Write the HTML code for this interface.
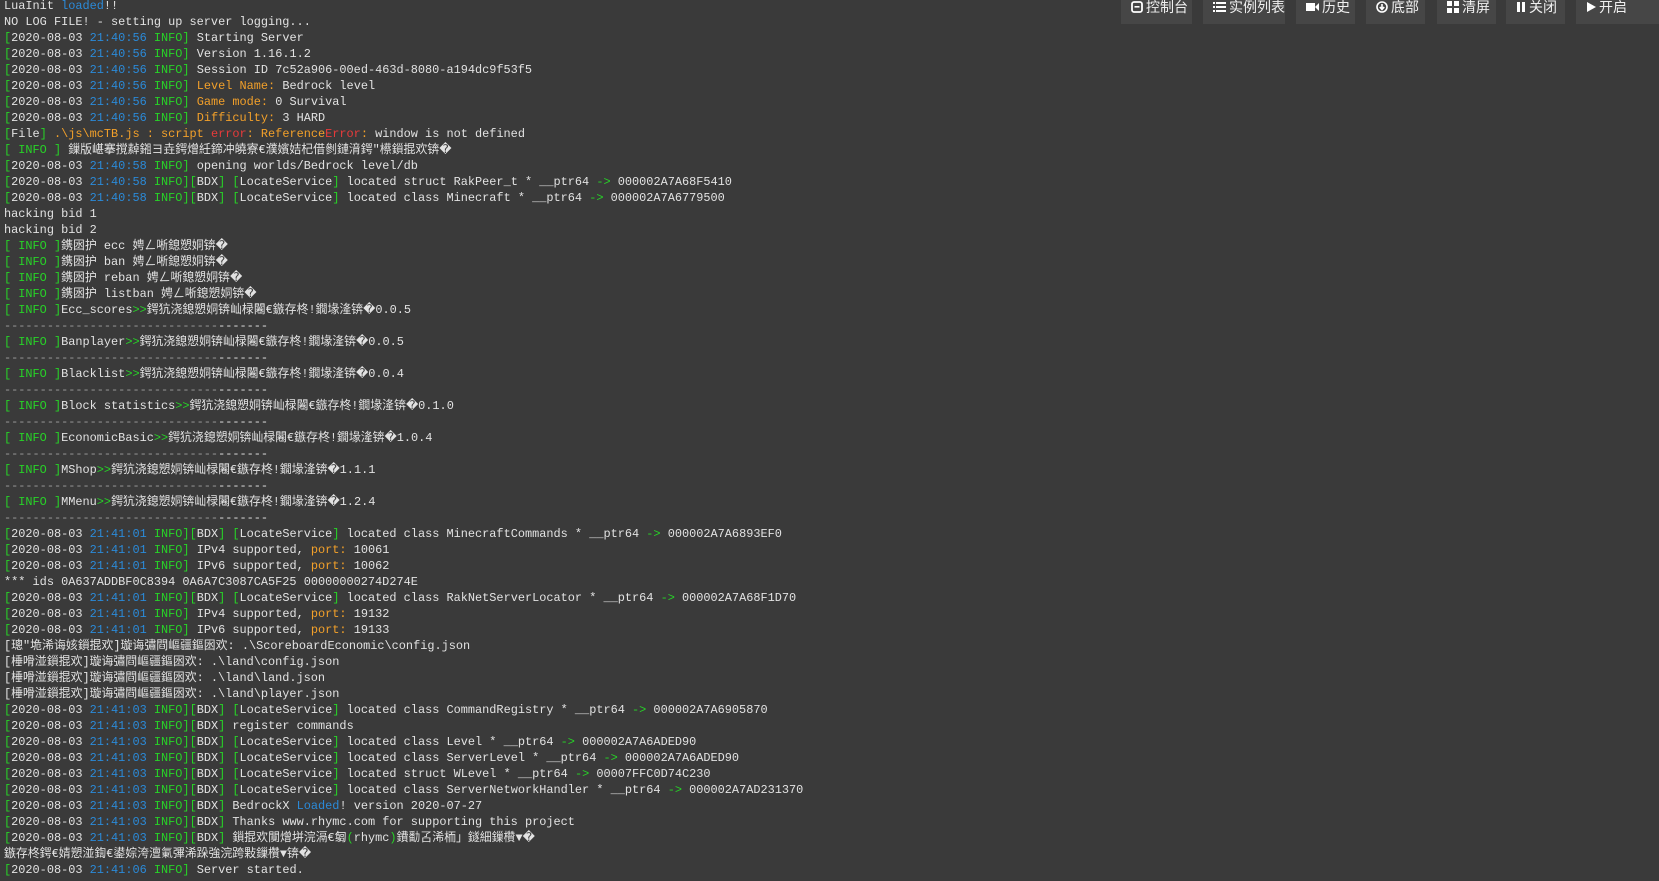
<!DOCTYPE html>
<html><head><meta charset="utf-8"><style>
html,body{margin:0;padding:0;background:#3a3a3a;width:1659px;height:881px;overflow:hidden}
pre{margin:-2px 0 0 4px;font-family:"Liberation Mono","Noto Sans CJK SC",monospace;font-size:11.9px;line-height:16px;color:#e2e2e2;white-space:pre}
.g{color:#27d327}.b{color:#2b8ad8}.o{color:#f2a02a}.r{color:#e83a3a}.d{color:#9a9a9a}
.btn{position:absolute;top:0;height:24px;background:#464646;color:#f0f0f0;font-family:"Liberation Sans","Noto Sans CJK SC",sans-serif;font-size:14px;line-height:15px;display:flex;align-items:flex-start;padding-left:10px;box-sizing:border-box}
.btn span{margin-left:3px}
.ic{display:inline-block;margin-top:1px}
</style></head><body>
<pre>LuaInit <span class="b">loaded</span>!!
NO LOG FILE! - setting up server logging...
<span class="g">[</span>2020-08-03 <span class="b">21:40:56</span> <span class="g">INFO]</span> Starting Server
<span class="g">[</span>2020-08-03 <span class="b">21:40:56</span> <span class="g">INFO]</span> Version 1.16.1.2
<span class="g">[</span>2020-08-03 <span class="b">21:40:56</span> <span class="g">INFO]</span> Session ID 7c52a906-00ed-463d-8080-a194dc9f53f5
<span class="g">[</span>2020-08-03 <span class="b">21:40:56</span> <span class="g">INFO]</span> <span class="o">Level Name:</span> Bedrock level
<span class="g">[</span>2020-08-03 <span class="b">21:40:56</span> <span class="g">INFO]</span> <span class="o">Game mode:</span> 0 Survival
<span class="g">[</span>2020-08-03 <span class="b">21:40:56</span> <span class="g">INFO]</span> <span class="o">Difficulty:</span> 3 HARD
<span class="g">[</span>File<span class="g">]</span> <span class="o">.\js\mcTB.js : script </span><span class="r">error</span><span class="o">: Reference</span><span class="r">Error</span><span class="o">:</span> window is not defined
<span class="g">[ INFO ]</span> 鏁版嵁搴撹繛鎺ヨ垚鍔熷紝鍗冲皢寮€濮嬪姞杞借剼鏈湇鍔″櫒鎻掍欢锛�
<span class="g">[</span>2020-08-03 <span class="b">21:40:58</span> <span class="g">INFO]</span> opening worlds/Bedrock level/db
<span class="g">[</span>2020-08-03 <span class="b">21:40:58</span> <span class="g">INFO]</span><span class="g">[</span>BDX<span class="g">]</span> <span class="g">[</span>LocateService<span class="g">]</span> located struct RakPeer_t * __ptr64 <span class="g">-&gt;</span> 000002A7A68F5410
<span class="g">[</span>2020-08-03 <span class="b">21:40:58</span> <span class="g">INFO]</span><span class="g">[</span>BDX<span class="g">]</span> <span class="g">[</span>LocateService<span class="g">]</span> located class Minecraft * __ptr64 <span class="g">-&gt;</span> 000002A7A6779500
hacking bid 1
hacking bid 2
<span class="g">[ INFO ]</span>鎸囦护 ecc 娉ㄥ唽鎴愬姛锛�
<span class="g">[ INFO ]</span>鎸囦护 ban 娉ㄥ唽鎴愬姛锛�
<span class="g">[ INFO ]</span>鎸囦护 reban 娉ㄥ唽鎴愬姛锛�
<span class="g">[ INFO ]</span>鎸囦护 listban 娉ㄥ唽鎴愬姛锛�
<span class="g">[ INFO ]</span>Ecc_scores<span class="g">&gt;&gt;</span>鍔犺浇鎴愬姛锛屾椂闂€鏃存柊!鐗堟湰锛�0.0.5
<span class="d">------------------------------</span>-------
<span class="g">[ INFO ]</span>Banplayer<span class="g">&gt;&gt;</span>鍔犺浇鎴愬姛锛屾椂闂€鏃存柊!鐗堟湰锛�0.0.5
<span class="d">------------------------------</span>-------
<span class="g">[ INFO ]</span>Blacklist<span class="g">&gt;&gt;</span>鍔犺浇鎴愬姛锛屾椂闂€鏃存柊!鐗堟湰锛�0.0.4
<span class="d">------------------------------</span>-------
<span class="g">[ INFO ]</span>Block statistics<span class="g">&gt;&gt;</span>鍔犺浇鎴愬姛锛屾椂闂€鏃存柊!鐗堟湰锛�0.1.0
<span class="d">------------------------------</span>-------
<span class="g">[ INFO ]</span>EconomicBasic<span class="g">&gt;&gt;</span>鍔犺浇鎴愬姛锛屾椂闂€鏃存柊!鐗堟湰锛�1.0.4
<span class="d">------------------------------</span>-------
<span class="g">[ INFO ]</span>MShop<span class="g">&gt;&gt;</span>鍔犺浇鎴愬姛锛屾椂闂€鏃存柊!鐗堟湰锛�1.1.1
<span class="d">------------------------------</span>-------
<span class="g">[ INFO ]</span>MMenu<span class="g">&gt;&gt;</span>鍔犺浇鎴愬姛锛屾椂闂€鏃存柊!鐗堟湰锛�1.2.4
<span class="d">------------------------------</span>-------
<span class="g">[</span>2020-08-03 <span class="b">21:41:01</span> <span class="g">INFO]</span><span class="g">[</span>BDX<span class="g">]</span> <span class="g">[</span>LocateService<span class="g">]</span> located class MinecraftCommands * __ptr64 <span class="g">-&gt;</span> 000002A7A6893EF0
<span class="g">[</span>2020-08-03 <span class="b">21:41:01</span> <span class="g">INFO]</span> IPv4 supported, <span class="o">port:</span> 10061
<span class="g">[</span>2020-08-03 <span class="b">21:41:01</span> <span class="g">INFO]</span> IPv6 supported, <span class="o">port:</span> 10062
*** ids 0A637ADDBF0C8394 0A6A7C3087CA5F25 00000000274D274E
<span class="g">[</span>2020-08-03 <span class="b">21:41:01</span> <span class="g">INFO]</span><span class="g">[</span>BDX<span class="g">]</span> <span class="g">[</span>LocateService<span class="g">]</span> located class RakNetServerLocator * __ptr64 <span class="g">-&gt;</span> 000002A7A68F1D70
<span class="g">[</span>2020-08-03 <span class="b">21:41:01</span> <span class="g">INFO]</span> IPv4 supported, <span class="o">port:</span> 19132
<span class="g">[</span>2020-08-03 <span class="b">21:41:01</span> <span class="g">INFO]</span> IPv6 supported, <span class="o">port:</span> 19133
[璁″垝浠诲姟鎻掍欢]璇诲彇閰嶇疆鏂囦欢: .\ScoreboardEconomic\config.json
[棰嗗湴鎻掍欢]璇诲彇閰嶇疆鏂囦欢: .\land\config.json
[棰嗗湴鎻掍欢]璇诲彇閰嶇疆鏂囦欢: .\land\land.json
[棰嗗湴鎻掍欢]璇诲彇閰嶇疆鏂囦欢: .\land\player.json
<span class="g">[</span>2020-08-03 <span class="b">21:41:03</span> <span class="g">INFO]</span><span class="g">[</span>BDX<span class="g">]</span> <span class="g">[</span>LocateService<span class="g">]</span> located class CommandRegistry * __ptr64 <span class="g">-&gt;</span> 000002A7A6905870
<span class="g">[</span>2020-08-03 <span class="b">21:41:03</span> <span class="g">INFO]</span><span class="g">[</span>BDX<span class="g">]</span> register commands
<span class="g">[</span>2020-08-03 <span class="b">21:41:03</span> <span class="g">INFO]</span><span class="g">[</span>BDX<span class="g">]</span> <span class="g">[</span>LocateService<span class="g">]</span> located class Level * __ptr64 <span class="g">-&gt;</span> 000002A7A6ADED90
<span class="g">[</span>2020-08-03 <span class="b">21:41:03</span> <span class="g">INFO]</span><span class="g">[</span>BDX<span class="g">]</span> <span class="g">[</span>LocateService<span class="g">]</span> located class ServerLevel * __ptr64 <span class="g">-&gt;</span> 000002A7A6ADED90
<span class="g">[</span>2020-08-03 <span class="b">21:41:03</span> <span class="g">INFO]</span><span class="g">[</span>BDX<span class="g">]</span> <span class="g">[</span>LocateService<span class="g">]</span> located struct WLevel * __ptr64 <span class="g">-&gt;</span> 00007FFC0D74C230
<span class="g">[</span>2020-08-03 <span class="b">21:41:03</span> <span class="g">INFO]</span><span class="g">[</span>BDX<span class="g">]</span> <span class="g">[</span>LocateService<span class="g">]</span> located class ServerNetworkHandler * __ptr64 <span class="g">-&gt;</span> 000002A7AD231370
<span class="g">[</span>2020-08-03 <span class="b">21:41:03</span> <span class="g">INFO]</span><span class="g">[</span>BDX<span class="g">]</span> BedrockX <span class="b">Loaded</span>! version 2020-07-27
<span class="g">[</span>2020-08-03 <span class="b">21:41:03</span> <span class="g">INFO]</span><span class="g">[</span>BDX<span class="g">]</span> Thanks www.rhymc.com for supporting this project
<span class="g">[</span>2020-08-03 <span class="b">21:41:03</span> <span class="g">INFO]</span><span class="g">[</span>BDX<span class="g">]</span> 鎻掍欢闃熷垪浣滆€匔<span class="g">(</span>rhymc<span class="g">)</span>鐨勫叾浠栭」鐩細鏁欑▼�
鏃存柊鍔€婧愬湴鍧€鍙婃洿澶氭彃浠跺強浣跨敤鏁欑▼锛�
<span class="g">[</span>2020-08-03 <span class="b">21:41:06</span> <span class="g">INFO]</span> Server started.
</pre>
<div class="btn" style="left:1121px;width:71px"><svg class="ic" width="12" height="12" viewBox="0 0 12 12"><rect x="1" y="1" width="10" height="10" rx="2" fill="none" stroke="#fff" stroke-width="1.8"/><rect x="3.5" y="5" width="5" height="1.6" fill="#fff"/></svg><span>控制台</span></div>
<div class="btn" style="left:1203px;width:82px"><svg class="ic" width="13" height="12" viewBox="0 0 13 12"><g fill="#fff"><rect x="0" y="1" width="2" height="2"/><rect x="3" y="1" width="10" height="2"/><rect x="0" y="5" width="2" height="2"/><rect x="3" y="5" width="10" height="2"/><rect x="0" y="9" width="2" height="2"/><rect x="3" y="9" width="10" height="2"/></g></svg><span>实例列表</span></div>
<div class="btn" style="left:1296px;width:59px"><svg class="ic" width="13" height="12" viewBox="0 0 13 12"><rect x="0" y="2" width="9" height="8" fill="#fff"/><path d="M9 6 L13 2 V10Z" fill="#fff"/></svg><span>历史</span></div>
<div class="btn" style="left:1366px;width:59px"><svg class="ic" width="12" height="12" viewBox="0 0 12 12"><circle cx="6" cy="6" r="5" fill="none" stroke="#fff" stroke-width="1.6"/><path d="M6 3V8M3.8 6 L6 8.4 L8.2 6" stroke="#fff" stroke-width="1.6" fill="none"/></svg><span>底部</span></div>
<div class="btn" style="left:1437px;width:59px"><svg class="ic" width="12" height="12" viewBox="0 0 12 12"><g fill="#fff"><rect x="0" y="0" width="5" height="5"/><rect x="7" y="0" width="5" height="5"/><rect x="0" y="7" width="5" height="5"/><rect x="7" y="7" width="5" height="5"/></g></svg><span>清屏</span></div>
<div class="btn" style="left:1506px;width:59px"><svg class="ic" width="10" height="12" viewBox="0 0 10 12"><rect x="1" y="1" width="3" height="10" fill="#fff"/><rect x="6" y="1" width="3" height="10" fill="#fff"/></svg><span>关闭</span></div>
<div class="btn" style="left:1576px;width:90px"><svg class="ic" width="10" height="12" viewBox="0 0 10 12"><path d="M1 1 L10 6 L1 11Z" fill="#fff"/></svg><span>开启</span></div>
</body></html>
